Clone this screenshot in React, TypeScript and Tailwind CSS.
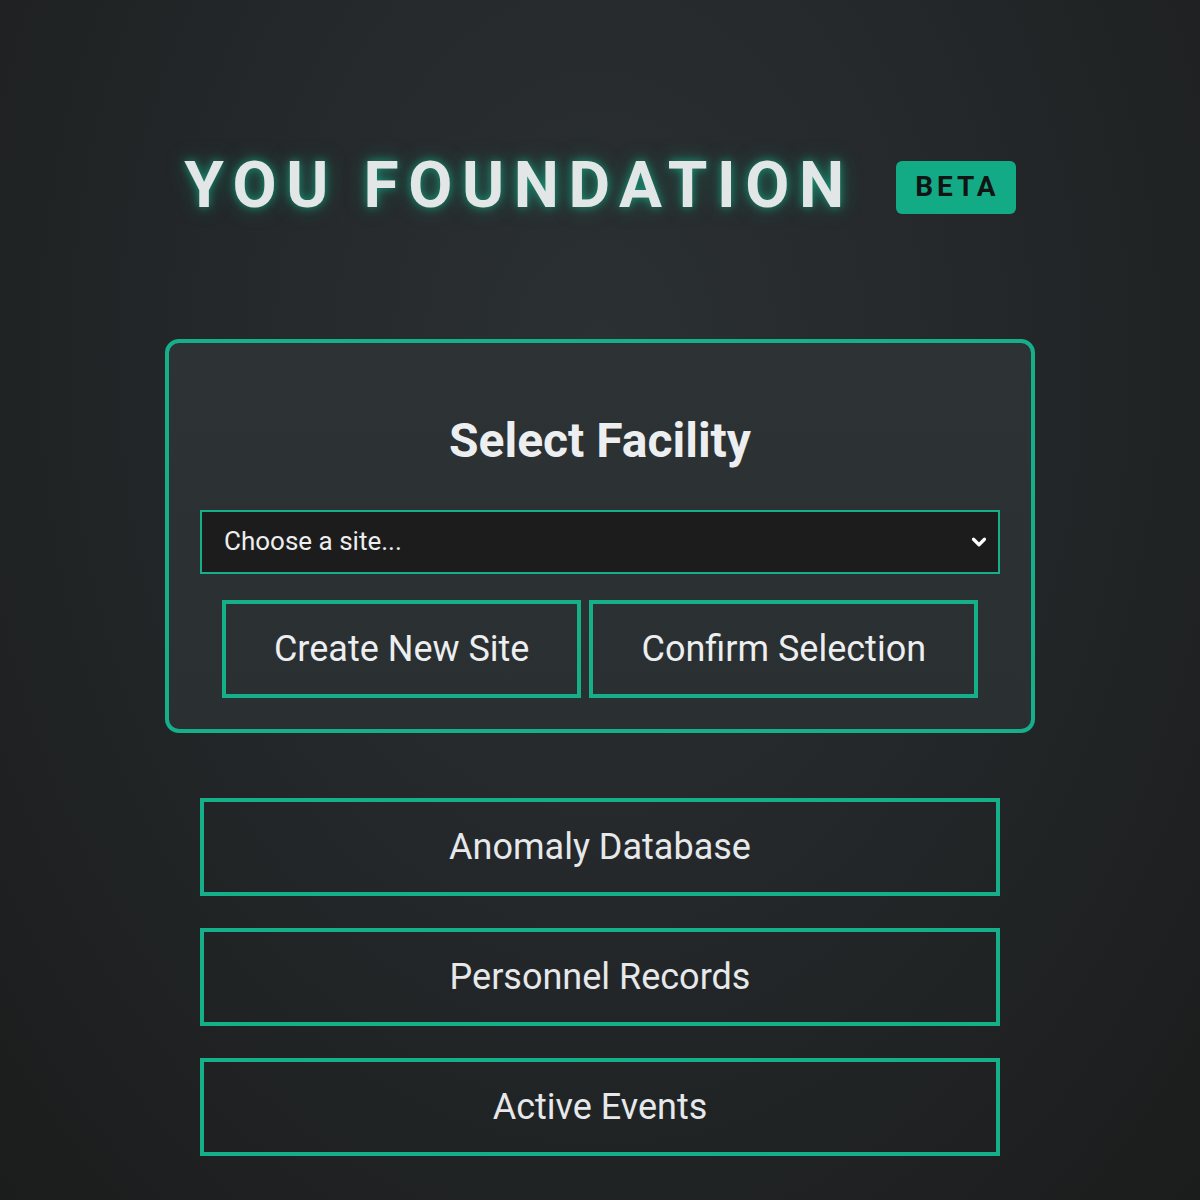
import { ChevronDown } from 'lucide-react';

const navItems = ['Anomaly Database', 'Personnel Records', 'Active Events'];

export default function App() {
    return (
        <div
            className="min-h-[1200px] w-full bg-[radial-gradient(ellipse_at_50%_30%,#2b3032_0%,#24282a_45%,#1b1c1c_100%)] text-[#e8eaec]"
            style={{ fontFamily: 'Roboto, "Liberation Sans", sans-serif' }}
        >
            <div className="mx-auto flex w-[870px] flex-col items-center pt-[154px]">
                {/* header */}
                <div className="flex items-center gap-[42px] whitespace-nowrap">
                    <h1 className="text-[64px] font-bold leading-none tracking-[0.15em] text-[#e3e6e7] [text-shadow:0_0_10px_rgba(20,180,140,0.75),0_0_22px_rgba(20,180,140,0.35)]">
                        YOU FOUNDATION
                    </h1>
                    <span className="mt-[2px] flex h-[53px] w-[120px] items-center justify-center rounded-[6px] bg-[#13ab86] pl-[3px] text-[28px] font-bold tracking-[0.14em] text-[#111413]">
                        BETA
                    </span>
                </div>

                {/* facility card */}
                <div className="mt-[121px] w-[870px] rounded-[14px] border-[4px] border-[#15b08a] bg-[linear-gradient(180deg,#2d3335,#2a2f31)] px-[31px] pb-[31px] pt-[31px]">
                    <h2 className="mb-[40px] mt-[38px] text-center text-[48px] font-bold leading-[1.2] text-[#eceeef]">
                        Select Facility
                    </h2>
                    <div className="relative h-[64px] w-full border-2 border-[#15b08a] bg-[#1c1c1c]">
                        <select className="h-full w-full appearance-none bg-transparent pl-[22px] text-[26px] text-[#eceeef] outline-none">
                            <option>Choose a site...</option>
                        </select>
                        <ChevronDown className="pointer-events-none absolute right-[8px] top-1/2 h-[22px] w-[22px] -translate-y-1/2 text-white" strokeWidth={3.5} />
                    </div>
                    <div className="mt-[26px] flex justify-center gap-[8px]">
                        <button className="h-[98px] border-[4px] border-[#15b08a] px-[48px] text-[36px] text-[#eceeef]">
                            Create New Site
                        </button>
                        <button className="h-[98px] border-[4px] border-[#15b08a] px-[48px] text-[36px] text-[#eceeef]">
                            Confirm Selection
                        </button>
                    </div>
                </div>

                {/* nav */}
                <div className="mt-[65px] flex w-[800px] flex-col gap-[32px]">
                    {navItems.map((item) => (
                        <button
                            key={item}
                            className="h-[98px] w-full border-[4px] border-[#15b08a] text-[36px] text-[#e6e8ea]"
                        >
                            {item}
                        </button>
                    ))}
                </div>
            </div>
        </div>
    );
}
